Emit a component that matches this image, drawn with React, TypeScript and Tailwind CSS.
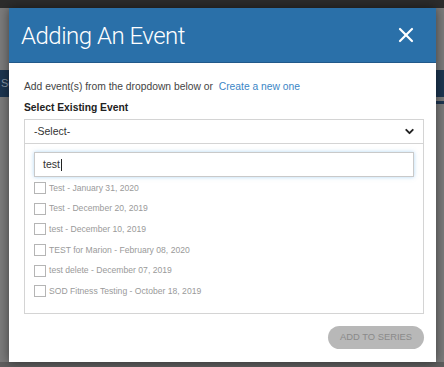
import { ChevronDown, X } from "lucide-react";

const events = [
  "Test - January 31, 2020",
  "Test - December 20, 2019",
  "test - December 10, 2019",
  "TEST for Marion - February 08, 2020",
  "test delete - December 07, 2019",
  "SOD Fitness Testing - October 18, 2019",
];

export default function App() {
  return (
    <div
      className="relative h-[367px] w-[444px] overflow-hidden bg-[#7b7b7b]"
      style={{ fontFamily: '"Liberation Sans", Arial, sans-serif' }}
    >
      {/* dimmed page behind */}
      <div className="h-[8px] bg-[#2c2c2c]" />
      <div className="mt-[62px] flex h-[27px] items-center bg-[#1c3550] pl-[1px] text-[11px] text-[#8a97a5]">
        Se
      </div>
      <div className="absolute right-0 top-[101px] h-[3px] w-[12px] bg-[#1c3550]" />
      <div className="absolute bottom-0 left-0 h-[5px] w-full bg-[#5e5e5e]" />

      {/* modal */}
      <div className="absolute left-[9px] top-[8px] flex h-[354px] w-[427px] flex-col bg-white shadow-[0_0_10px_rgba(0,0,0,0.5)]">
        <div className="flex h-[55px] items-center justify-between border-b border-[#21598a] bg-[#2a70a9] pl-[12px] pr-[18px]">
          <h1
            className="pt-[1px] text-[24px] font-light tracking-[-0.5px] text-white"
            style={{ fontFamily: "Roboto, sans-serif" }}
          >
            Adding An Event
          </h1>
          <X className="h-[24px] w-[24px] text-white" strokeWidth={2.2} />
        </div>

        <div className="flex flex-1 flex-col pl-[15px] pr-[12px] pt-[18px]">
          <p className="text-[10.3px] leading-[12px] text-[#444]">
            Add event(s) from the dropdown below or{" "}
            <span className="ml-[3px] text-[#3b86c6]">Create a new one</span>
          </p>
          <p className="mt-[9px] text-[10.3px] font-bold leading-[12px] text-[#222]">
            Select Existing Event
          </p>

          <div className="mt-[5px] border border-[#d4d4d4]">
            <div className="flex h-[24px] items-center justify-between border-b border-[#d4d4d4] pl-[9px] pr-[7px] text-[10.5px] text-[#333]">
              <span>-Select-</span>
              <ChevronDown className="h-[13px] w-[13px] text-[#222]" strokeWidth={3.5} />
            </div>
            <div className="h-[169px] px-[9px] pt-[8px]">
              <div className="flex h-[25px] items-center border border-[#c9c9c9] pl-[8px] text-[10.5px] text-[#333] shadow-[0_0_4px_rgba(102,175,233,0.5)]">
                test<span className="ml-[1px] h-[12px] w-px bg-[#222]" />
              </div>
              <ul className="mt-[1px]">
                {events.map((e) => (
                  <li
                    key={e}
                    className="flex h-[20.6px] items-center gap-[3px] text-[8.6px] text-[#9a9a9a]"
                  >
                    <span className="h-[12px] w-[12px] border border-[#b5b5b5] bg-white" />
                    <span>{e}</span>
                  </li>
                ))}
              </ul>
            </div>
          </div>

          <div className="mt-[12px] flex justify-end">
            <button className="h-[23px] w-[96px] rounded-full bg-[#b8b8b8] text-[9.4px] text-[#8a8a8a]">
              ADD TO SERIES
            </button>
          </div>
        </div>
      </div>
    </div>
  );
}
